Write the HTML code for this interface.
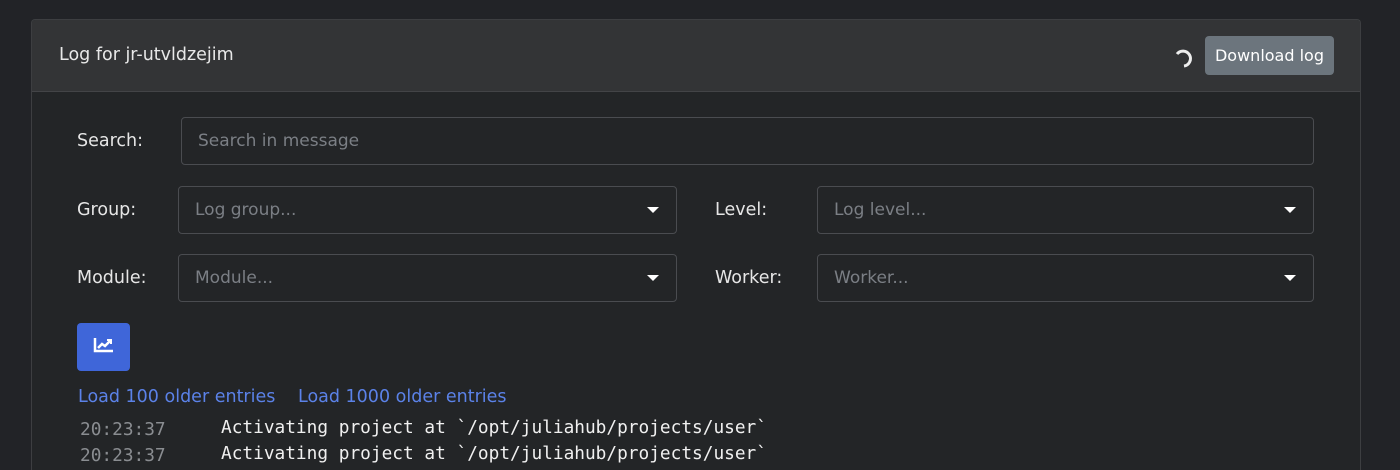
<!DOCTYPE html>
<html style="height:470px;overflow:hidden"><head><style>
*{box-sizing:border-box;margin:0;padding:0}
body{width:1400px;height:470px;background:#222327;font-family:"DejaVu Sans","Liberation Sans",sans-serif;overflow:hidden;position:relative;color:#e6e6e6}
.panel{position:absolute;left:31px;top:19px;width:1330px;height:451px;background:#232527;border:1px solid #3d3e41;border-bottom:none;border-radius:4px 4px 0 0;overflow:hidden}
.hdr{position:absolute;left:0;top:0;width:100%;height:72px;background:#333436;border-bottom:1px solid #434447}
.t{position:absolute;font-size:17.5px;white-space:nowrap}
.inp{position:absolute;border:1px solid #4a4c50;border-radius:4px;background:#232527;font-size:17px;color:#7b7f85;padding-left:16px;line-height:47px}
.car{position:absolute;right:17px;top:20px;width:0;height:0;border-left:6px solid transparent;border-right:6px solid transparent;border-top:6px solid #fff}
.mono{font-family:"DejaVu Sans Mono","Liberation Mono",monospace;font-size:17.8px;position:absolute;white-space:pre}
</style></head><body>
<div class="panel">
<div class="hdr">
<div class="t" style="left:27px;top:25px;color:#e8e8e8">Log for jr-utvldzejim</div>
<svg style="position:absolute;left:1140px;top:26px" width="24" height="24" viewBox="0 0 24 24"><path d="M5 8 A7.5 7.5 0 1 1 12 20" fill="none" stroke="#eee" stroke-width="3"/></svg>
<div style="position:absolute;left:1173px;top:16px;width:129px;height:39px;background:#6c757d;border-radius:4px;color:#fff;font-size:16px;line-height:39px;text-align:center">Download log</div>
</div>
<div class="t" style="left:45px;top:111px">Search:</div>
<div class="inp" style="left:149px;top:97px;width:1133px;height:48px">Search in message</div>
<div class="t" style="left:45px;top:180px">Group:</div>
<div class="inp" style="left:146px;top:166px;width:499px;height:48px">Log group...<div class="car"></div></div>
<div class="t" style="left:683px;top:180px">Level:</div>
<div class="inp" style="left:785px;top:166px;width:497px;height:48px">Log level...<div class="car"></div></div>
<div class="t" style="left:45px;top:248px">Module:</div>
<div class="inp" style="left:146px;top:234px;width:499px;height:48px">Module...<div class="car"></div></div>
<div class="t" style="left:683px;top:248px">Worker:</div>
<div class="inp" style="left:785px;top:234px;width:497px;height:48px">Worker...<div class="car"></div></div>
<div style="position:absolute;left:45px;top:303px;width:53px;height:48px;background:#3f66d9;border-radius:4px">
<svg style="position:absolute;left:16px;top:14px" width="22" height="18" viewBox="0 0 22 18"><path d="M2 1V14H20" fill="none" stroke="#fff" stroke-width="2.5"/><path d="M5 11L9 7L12 9L17 4" fill="none" stroke="#fff" stroke-width="2.5"/><path d="M14 3H18V7" fill="none" stroke="#fff" stroke-width="2"/></svg></div>
<div class="t" style="left:46px;top:367px;color:#5b82e8;font-size:17.5px">Load 100 older entries</div>
<div class="t" style="left:266px;top:367px;color:#5b82e8;font-size:17.5px">Load 1000 older entries</div>
<div class="mono" style="left:48px;top:399px;color:#8a8d91">20:23:37</div>
<div class="mono" style="left:189px;top:397px;color:#f0f0f0">Activating project at `/opt/juliahub/projects/user`</div>
<div class="mono" style="left:48px;top:425px;color:#8a8d91">20:23:37</div>
<div class="mono" style="left:189px;top:423px;color:#f0f0f0">Activating project at `/opt/juliahub/projects/user`</div>
</div>
</body></html>
